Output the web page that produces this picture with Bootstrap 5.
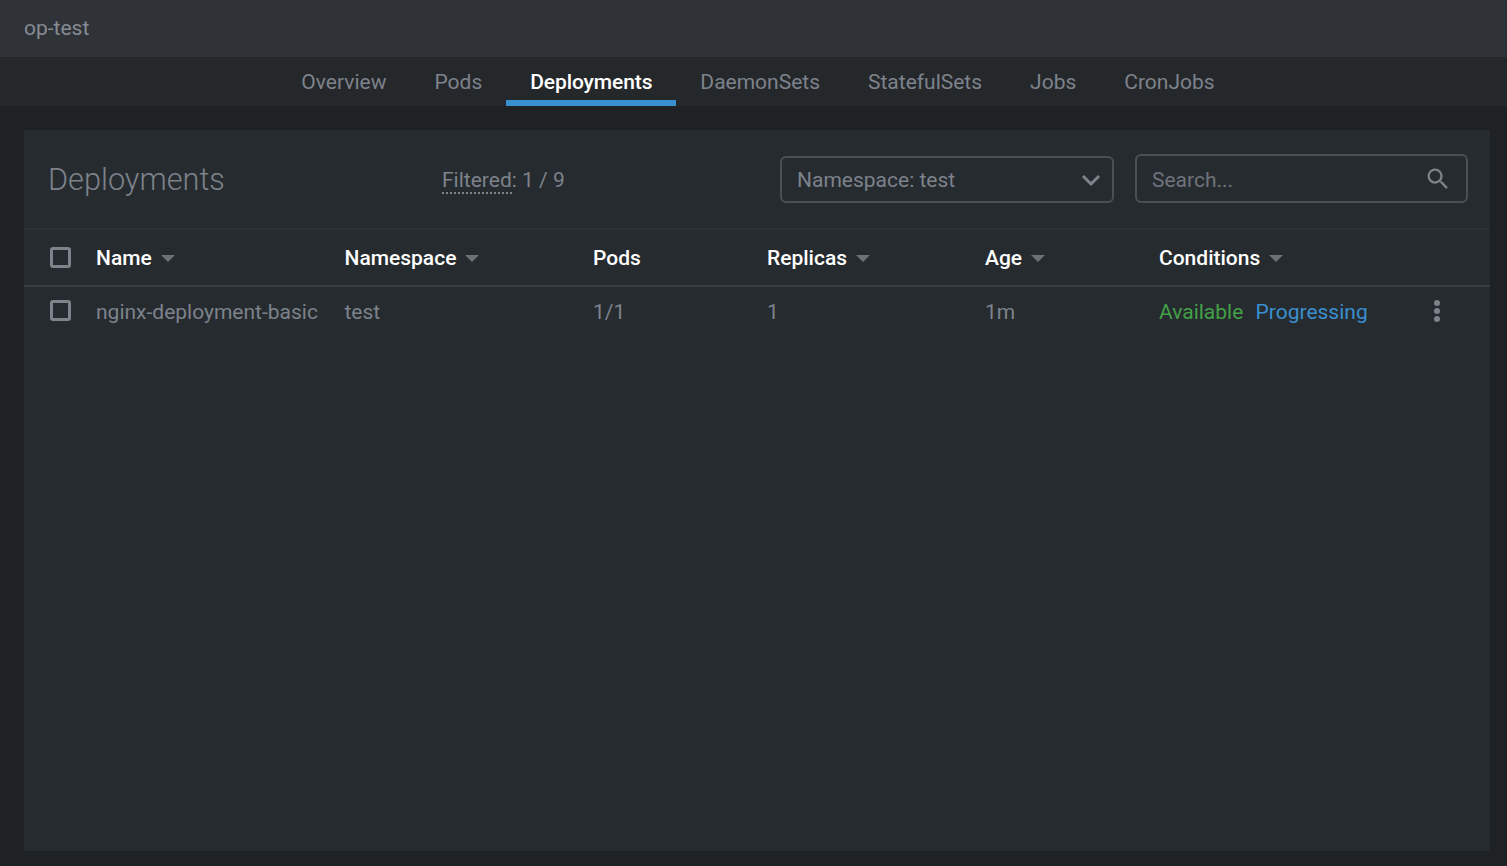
<!DOCTYPE html>
<html lang="en">
<head>
    <meta charset="UTF-8">
    <title>op-test</title>
    <link href="https://cdn.jsdelivr.net/npm/bootstrap@5.3.0/dist/css/bootstrap.min.css" rel="stylesheet">
    <style>
        html, body { height: 100%; }
        body {
            font-family: Roboto, "Liberation Sans", sans-serif;
            font-size: 21px;
            background-color: #1e2225;
            color: #7d828b;
            overflow: hidden;
        }
        .top-bar {
            height: 57px;
            background-color: #2f3237;
            padding-left: 24px;
            line-height: 56px;
            color: #868b93;
        }
        .tab-bar { height: 49px; padding-left: 9px; background-color: #25282b; }
        .tab-link {
            display: block;
            height: 49px;
            padding: 0 24px;
            line-height: 50px;
            color: #7d828b;
            text-decoration: none;
        }
        .tab-link.current {
            color: #fff;
            font-weight: 500;
            letter-spacing: -0.1px;
            border-bottom: 6px solid #3a8fd0;
        }
        .main-panel {
            margin: 24px 17px 0 24px;
            height: 721px;
            background-color: #262b2f;
        }
        .panel-head {
            height: 100px;
            padding: 24px 22px 0 24px;
            border-bottom: 2px solid #2c3135;
        }
        .panel-title {
            width: 394px;
            margin: 2px 0 0;
            font-size: 30.7px;
            font-weight: 300;
            line-height: 48px;
            color: #7d828b;
        }
        .filter-info { width: 338px; margin-top: 1px; line-height: 50px; color: #7d828b; }
        .filter-info abbr {
            text-decoration: none;
            border-bottom: 2px dotted #7d828b;
            cursor: help;
        }
        .ns-select, .search-box {
            display: flex;
            align-items: center;
            justify-content: space-between;
            border: 2px solid #4a4f55;
            border-radius: 6px;
            color: #7d828b;
        }
        .ns-select { width: 334px; height: 47px; margin-top: 2px; padding: 0 11px 0 15px; }
        .ns-select span { margin-top: 2px; }
        .search-box { width: 333px; height: 49px; margin-left: 21px; padding: 0 14px 0 15px; }
        .search-box input {
            width: 240px;
            margin-top: 4px;
            border: 0;
            outline: 0;
            padding: 0;
            font: inherit;
            color: #7d828b;
            background: transparent;
        }
        .search-box input::placeholder { color: #6f747c; opacity: 1; }
        .deploy-table {
            --bs-table-bg: transparent;
            --bs-table-color: #7d828b;
            margin: 0;
            table-layout: fixed;
            width: 100%;
        }
        .deploy-table th, .deploy-table td {
            padding: 2px 0 0;
            border: 0;
            vertical-align: middle;
        }
        .deploy-table thead tr { height: 56px; }
        .deploy-table th { color: #fff; font-weight: 500; border-bottom: 2px solid #3a3f44; }
        .deploy-table tbody tr { height: 50px; }
        .deploy-table .check-col { width: 72px; padding: 0 0 0 26px; }
        .deploy-table .menu-col { padding: 0; }
        .fake-check {
            display: block;
            width: 21px;
            height: 21px;
            border: 3px solid #7d828b;
            border-radius: 3px;
        }
        tbody .fake-check { margin-bottom: 2px; }
        .sort-caret {
            display: inline-block;
            width: 0;
            height: 0;
            margin-left: 9px;
            vertical-align: 3px;
            border-left: 7px solid transparent;
            border-right: 7px solid transparent;
            border-top: 7px solid #6d7175;
        }
        .cond-ok { color: #43a047; }
        .cond-prog { color: #3a8fd0; margin-left: 7px; }
        .row-menu { display: block; margin: 0 0 2px 2px; }
    </style>
</head>
<body>
    <div class="top-bar">op-test</div>
    <nav class="tab-bar d-flex justify-content-center">
        <a class="tab-link" href="#">Overview</a>
        <a class="tab-link" href="#">Pods</a>
        <a class="tab-link current" href="#">Deployments</a>
        <a class="tab-link" href="#">DaemonSets</a>
        <a class="tab-link" href="#">StatefulSets</a>
        <a class="tab-link" href="#">Jobs</a>
        <a class="tab-link" href="#">CronJobs</a>
    </nav>

    <div class="main-panel">
        <div class="panel-head d-flex align-items-start">
            <h1 class="panel-title">Deployments</h1>
            <div class="filter-info"><abbr title="Filtered">Filtered</abbr>: 1 / 9</div>
            <div class="ns-select">
                <span>Namespace: test</span>
                <svg width="20" height="20" viewBox="0 0 20 20"><path d="M2 6l8 8 8-8" fill="none" stroke="#7d828b" stroke-width="3"/></svg>
            </div>
            <div class="search-box">
                <input type="text" placeholder="Search...">
                <svg width="28" height="28" viewBox="0 0 24 24"><path fill="#7d828b" d="M15.5 14h-.79l-.28-.27A6.471 6.471 0 0 0 16 9.5 6.5 6.5 0 1 0 9.5 16c1.61 0 3.09-.59 4.23-1.57l.27.28v.79l5 4.99L20.49 19l-4.99-5zm-6 0C7.01 14 5 11.99 5 9.5S7.01 5 9.5 5 14 7.01 14 9.5 11.99 14 9.5 14z"/></svg>
            </div>
        </div>

        <table class="table deploy-table">
            <colgroup>
                <col style="width:72px"><col style="width:248.5px"><col style="width:248.5px"><col style="width:174px"><col style="width:218px"><col style="width:174px"><col style="width:264px"><col>
            </colgroup>
            <thead>
                <tr>
                    <th class="check-col"><span class="fake-check"></span></th>
                    <th>Name<span class="sort-caret"></span></th>
                    <th>Namespace<span class="sort-caret"></span></th>
                    <th>Pods</th>
                    <th>Replicas<span class="sort-caret"></span></th>
                    <th>Age<span class="sort-caret"></span></th>
                    <th>Conditions<span class="sort-caret"></span></th>
                    <th></th>
                </tr>
            </thead>
            <tbody>
                <tr>
                    <td class="check-col"><span class="fake-check"></span></td>
                    <td>nginx-deployment-basic</td>
                    <td>test</td>
                    <td>1/1</td>
                    <td>1</td>
                    <td>1m</td>
                    <td><span class="cond-ok">Available</span> <span class="cond-prog">Progressing</span></td>
                    <td class="menu-col">
                        <svg class="row-menu" width="24" height="24" viewBox="0 0 24 24"><circle cx="12" cy="4" r="3" fill="#7d828b"/><circle cx="12" cy="12" r="3" fill="#7d828b"/><circle cx="12" cy="20" r="3" fill="#7d828b"/></svg>
                    </td>
                </tr>
            </tbody>
        </table>
    </div>

    <script src="https://cdn.jsdelivr.net/npm/bootstrap@5.3.0/dist/js/bootstrap.bundle.min.js"></script>
</body>
</html>
